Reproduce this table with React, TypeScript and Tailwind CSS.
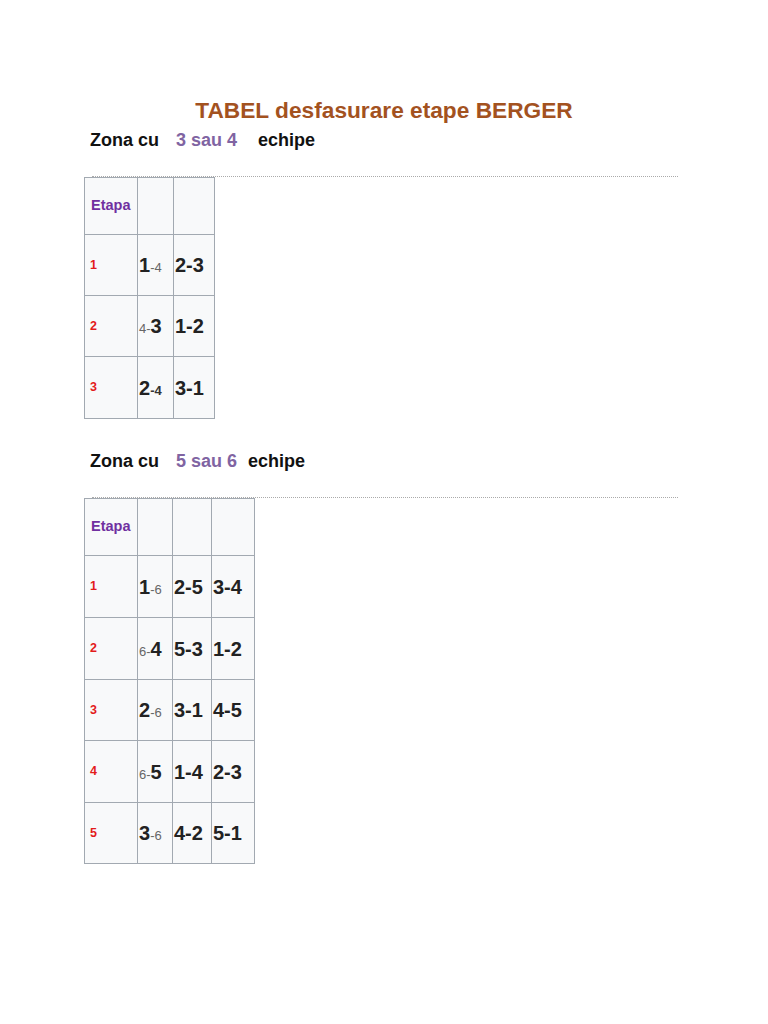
import React from "react";

type Cell = { a?: string; b?: string; smallFirst?: boolean; darkSmall?: boolean; full?: string };

const font = { fontFamily: '"Liberation Sans", Arial, sans-serif' };

function Pair({ cell }: { cell: Cell }) {
  if (cell.full) return <span className="text-[20px] font-bold text-[#222]">{cell.full}</span>;
  const smallCls = cell.darkSmall
    ? "text-[13px] font-bold text-[#333]"
    : "text-[13px] text-[#666]";
  if (cell.smallFirst) {
    return (
      <span>
        <span className={smallCls}>{cell.a}</span>
        <span className="text-[20px] font-bold text-[#222]">{cell.b}</span>
      </span>
    );
  }
  return (
    <span>
      <span className="text-[20px] font-bold text-[#222]">{cell.a}</span>
      <span className={smallCls}>{cell.b}</span>
    </span>
  );
}

function BergerTable({
  widths,
  heights,
  rows,
}: {
  widths: number[];
  heights: number[];
  rows: Cell[][];
}) {
  return (
    <table className="border-collapse bg-[#f8f9fa] ml-[84px]" style={{ tableLayout: "fixed" }}>
      <colgroup>
        {widths.map((w, i) => (
          <col key={i} style={{ width: w }} />
        ))}
      </colgroup>
      <tbody>
        <tr style={{ height: heights[0] }}>
          <td className="border border-[#a2a9b1] pl-[6px] align-middle text-[14.5px] font-bold text-[#7030a0]">
            Etapa
          </td>
          {widths.slice(1).map((_, i) => (
            <td key={i} className="border border-[#a2a9b1]"></td>
          ))}
        </tr>
        {rows.map((r, ri) => (
          <tr key={ri} style={{ height: heights[ri + 1] }}>
            <td className="border border-[#a2a9b1] pl-[5px] align-middle text-[12.5px] font-bold text-[#e31b1b]">
              {ri + 1}
            </td>
            {r.map((c, ci) => (
              <td key={ci} className="border border-[#a2a9b1] pl-[1px] align-middle whitespace-nowrap leading-none">
                <Pair cell={c} />
              </td>
            ))}
          </tr>
        ))}
      </tbody>
    </table>
  );
}

export default function App() {
  const t1: Cell[][] = [
    [{ a: "1", b: "-4" }, { full: "2-3" }],
    [{ a: "4-", b: "3", smallFirst: true }, { full: "1-2" }],
    [{ a: "2", b: "-4", darkSmall: true }, { full: "3-1" }],
  ];
  const t2: Cell[][] = [
    [{ a: "1", b: "-6" }, { full: "2-5" }, { full: "3-4" }],
    [{ a: "6-", b: "4", smallFirst: true }, { full: "5-3" }, { full: "1-2" }],
    [{ a: "2", b: "-6" }, { full: "3-1" }, { full: "4-5" }],
    [{ a: "6-", b: "5", smallFirst: true }, { full: "1-4" }, { full: "2-3" }],
    [{ a: "3", b: "-6" }, { full: "4-2" }, { full: "5-1" }],
  ];
  return (
    <div className="w-[768px] min-h-[1024px] bg-white pt-[97px]" style={font}>
      <h1 className="text-center text-[22.7px] leading-[26px] font-bold text-[#a3521f]">
        TABEL desfasurare etape BERGER
      </h1>
      <div className="mt-[7px] pl-[90px] h-[20px] flex items-center text-[18px] font-bold leading-[20px]">
        <span className="text-[#111] w-[86px]">Zona cu</span>
        <span className="text-[#8064a2] w-[82px]">3 sau 4</span>
        <span className="text-[#111]">echipe</span>
      </div>
      <div className="mt-[26px] ml-[92px] w-[586px] border-t border-dotted border-[#aaa]"></div>
      <BergerTable widths={[53, 36, 41]} heights={[57, 61, 61, 62]} rows={t1} />
      <div className="mt-[32px] pl-[90px] h-[20px] flex items-center text-[18px] font-bold leading-[20px]">
        <span className="text-[#111] w-[86px]">Zona cu</span>
        <span className="text-[#8064a2] w-[72px]">5 sau 6</span>
        <span className="text-[#111]">echipe</span>
      </div>
      <div className="mt-[26px] ml-[92px] w-[586px] border-t border-dotted border-[#aaa]"></div>
      <BergerTable widths={[53, 35, 39, 43]} heights={[57, 62, 62, 61, 62, 61]} rows={t2} />
    </div>
  );
}
